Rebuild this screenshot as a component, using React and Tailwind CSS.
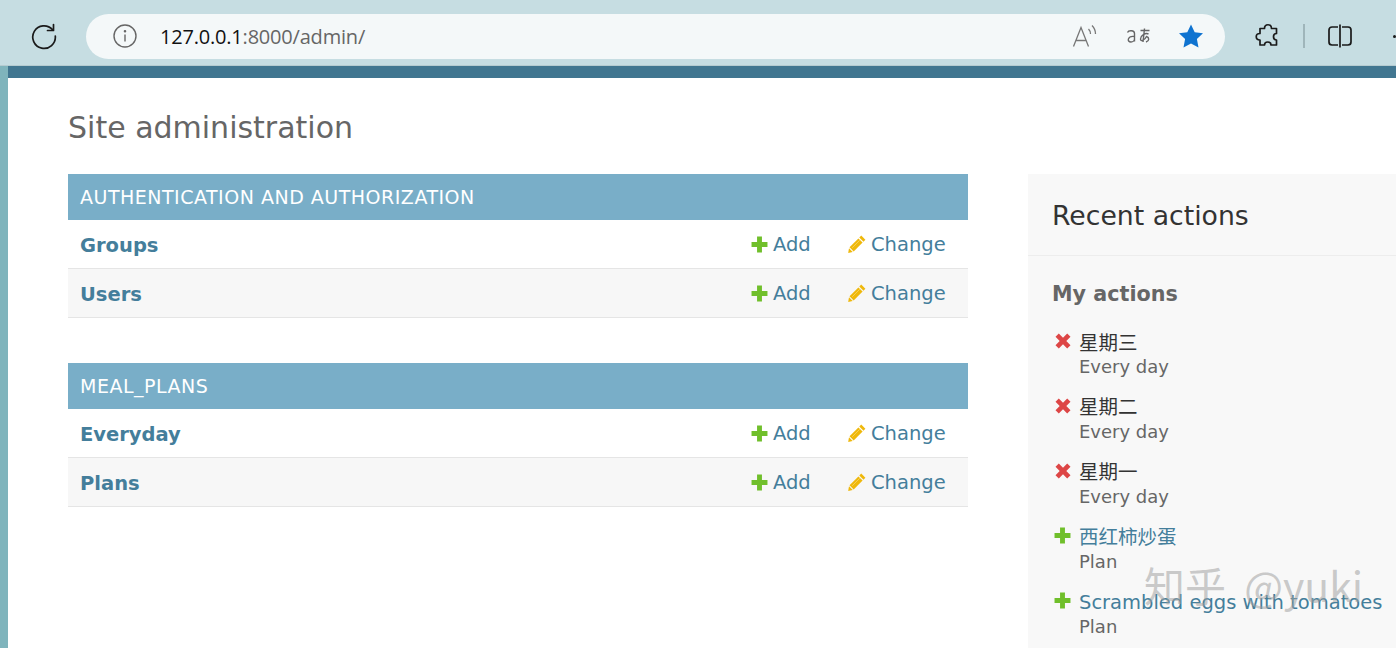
function Plus() {
  return (
    <svg viewBox="0 0 16 16" className="w-[17px] h-[17px] shrink-0">
      <path d="M5.700 0.500h4.600v5.200h5.200v4.600h-5.200v5.200H5.700v-5.200H0.500V5.700h5.200z" fill="#70bf2b" />
    </svg>
  );
}
function Pencil() {
  return (
    <svg viewBox="0 0 18 18" className="w-[18px] h-[18px] shrink-0">
      <path d="M13.200 0.600l4.200 4.200-1.900 1.900-4.200-4.200z" fill="#efb80b" />
      <path d="M10.400 3.400l4.200 4.200-8.900 8.900-4.200-4.200z" fill="#efb80b" />
      <path d="M1 13.300l3.700 3.700-4.500 0.900z" fill="#efb80b" />
      <path d="M4.200 12.800l7.500-7.500" stroke="#f7d56b" strokeWidth="0.800" />
    </svg>
  );
}
function Cross() {
  return (
    <svg viewBox="0 0 16 16" className="w-[16px] h-[16px] shrink-0 ml-[1px] mt-[1px]">
      <path d="M3.800 0.500L8 4.700l4.200-4.200 3.300 3.300L11.300 8l4.200 4.200-3.300 3.300L8 11.300l-4.200 4.200-3.300-3.300L4.700 8 0.500 3.800z" fill="#dd4646" />
    </svg>
  );
}
function Row({ name, alt }) {
  return (
    <div className={"flex items-center h-[49px] border-b border-[#e5e5e5] pl-[12px] text-[19.500px] text-[#447e9b] " + (alt ? "bg-[#f7f7f7]" : "bg-white")}>
      <span className="flex-1 font-bold leading-[24px] pt-[3px]">{name}</span>
      <span className="w-[97px] flex items-center gap-[5px]"><Plus /><span className="leading-[24px] pt-[2px]">Add</span></span>
      <span className="w-[120px] flex items-center gap-[5px]"><Pencil /><span className="leading-[24px] pt-[2px]">Change</span></span>
    </div>
  );
}
function Module({ title, rows, className = "" }) {
  return (
    <div className={className}>
      <div className="h-[46px] bg-[#79aec8] text-white text-[19px] tracking-[0.500px] pl-[12px] flex items-center">{title}</div>
      {rows.map((r, i) => <Row key={r} name={r} alt={i % 2 === 1} />)}
    </div>
  );
}
function Action({ icon, title, link, type, first }) {
  return (
    <div className="flex h-[65px] pl-[25px] relative">
      <span className="absolute left-[0px] top-[3px]">{icon}</span>
      <div className="leading-[25px]">
        <div className={"text-[19.500px] h-[25px] " + (first ? "pt-[2px] " : "pt-[1px] ") + (link ? "text-[#447e9b]" : "text-[#333333]")}>{title}</div>
        <div className="text-[18px] text-[#666666]">{type}</div>
      </div>
    </div>
  );
}

export default function App() {
  return (
    <div className="w-[1396px] h-[648px] overflow-hidden relative bg-white flex flex-col" style={{ fontFamily: '"DejaVu Sans", "Noto Sans CJK SC", sans-serif' }}>
      {/* browser bar */}
      <div className="h-[66px] shrink-0 bg-[#c6dde2] flex items-center pl-[30px] pt-[7px] pb-[0px] border-b border-[#b5cbd0]">
        <svg viewBox="0 0 28 28" className="w-[28px] h-[28px]" fill="none" stroke="#1a1a1a" strokeWidth="1.700">
          <path d="M22.500 7.600A11.300 11.300 0 1 0 25.300 14" strokeLinecap="round" />
          <path d="M23.500 2.500v6h-6" strokeLinecap="round" strokeLinejoin="round" />
        </svg>
        <div className="ml-[28px] w-[1139px] h-[45px] bg-[#f4f8f9] rounded-[23px] flex items-center pl-[27px] pr-[21px]" style={{ fontFamily: '"Open Sans", sans-serif' }}>
          <svg viewBox="0 0 24 24" className="w-[24px] h-[24px]" fill="none" stroke="#666" strokeWidth="1.400">
            <circle cx="12" cy="12" r="11" />
            <path d="M12 10.500v7" />
            <circle cx="12" cy="7.300" r="0.600" fill="#666" />
          </svg>
          <div className="ml-[23px] text-[20px] tracking-[-0.200px] flex-1 pt-[1px]">
            <span className="text-[#111]">127.0.0.1</span><span className="text-[#666]">:8000/admin/</span>
          </div>
          <svg viewBox="0 0 26 24" className="w-[26px] h-[24px]" fill="none" stroke="#777" strokeWidth="1.300">
            <path d="M1.500 22.500L9 3.500l7.500 19M4 16.500h10" />
            <path d="M16.500 5c1.500 1.500 2 3 2 5M20 1.500c2.500 2.500 3.500 5 3.500 8.500" />
          </svg>
          <svg viewBox="0 0 28 20" className="ml-[27px] w-[28px] h-[20px]" fill="none" stroke="#666" strokeWidth="1.400">
            <path d="M2.500 6.500c1-2.500 7-2.500 7 1v8M9.500 10.500c-7-1-8 5.500-3.500 5.500 2 0 3.500-1.500 3.500-3" />
            <path d="M15.500 4.500h9M19.500 2.500c-.5 5-1 9 -1.500 13.500M23.500 8c-3-1.500-8 1.500-8 5 0 3 4 1.500 6-2.500 3 1 3 4.500-.5 5.500" />
          </svg>
          <svg viewBox="0 0 26 26" className="ml-[25px] w-[26px] h-[26px]">
            <path d="M13 1.500l3.700 7.700 8.300 1.100-6.100 5.800 1.600 8.400L13 20.400l-7.500 4.100 1.600-8.400L1 10.300l8.300-1.100z" fill="#0f73d0" />
          </svg>
        </div>
        <svg viewBox="0 0 26 26" className="ml-[30px] w-[26px] h-[26px]" fill="none" stroke="#1a1a1a" strokeWidth="1.700" strokeLinejoin="round">
          <path d="M9.500 5.500c0-5 7-5 7 0h5v5c-4 0-4 6.500 0 6.500v5h-5.500c0-4-6.500-4-6.500 0H5v-5c-5 0-5-6.500 0-6.500V5.500z" />
        </svg>
        <div className="ml-[22px] w-[2px] h-[24px] bg-[#9fb5ba]" />
        <svg viewBox="0 0 26 26" className="ml-[22px] w-[26px] h-[26px]" fill="none" stroke="#1a1a1a" strokeWidth="1.700">
          <path d="M11 4H5a3 3 0 0 0-3 3v12a3 3 0 0 0 3 3h6M15 4h6a3 3 0 0 1 3 3v12a3 3 0 0 1-3 3h-6M13 1.500v23" />
        </svg>
        <div className="ml-[40px] w-[3px] h-[3px] rounded-full bg-[#1a1a1a] shrink-0" />
      </div>
      <div className="flex-1 flex min-h-0">
        <div className="w-[8px] bg-[#7fb4bc] shrink-0" />
        <div className="flex-1 min-w-0 flex flex-col">
          <div className="h-[12px] bg-[#417690] shrink-0" />
          <div className="pl-[60px] flex-1 min-h-0">
            <h1 className="text-[30px] leading-[36px] text-[#666666] mt-[32px]">Site administration</h1>
            <div className="flex mt-[28px]">
              <div className="w-[900px] shrink-0">
                <Module title="AUTHENTICATION AND AUTHORIZATION" rows={["Groups", "Users"]} />
                <Module title="MEAL_PLANS" rows={["Everyday", "Plans"]} className="mt-[45px]" />
              </div>
              <div className="ml-[60px] flex-1 bg-[#f8f8f8] h-[500px] pl-[24px] overflow-hidden">
                <div className="h-[82px] -ml-[24px] pl-[24px] pt-[4px] border-b border-[#ededed] flex items-center text-[26.700px] text-[#333333]">Recent actions</div>
                <div className="mt-[24px] font-bold text-[20.700px] leading-[28px] text-[#666666]">My actions</div>
                <div className="mt-[21px] pl-[2px]">
                  <Action icon={<Cross />} title="星期三" type="Every day" first />
                  <Action icon={<Cross />} title="星期二" type="Every day" />
                  <Action icon={<Cross />} title="星期一" type="Every day" />
                  <Action icon={<Plus />} title="西红柿炒蛋" type="Plan" link />
                  <Action icon={<Plus />} title="Scrambled eggs with tomatoes" type="Plan" link />
                </div>
              </div>
            </div>
          </div>
        </div>
      </div>
      <div className="absolute left-[1144px] top-[559px] text-[41px] leading-[50px] text-[#a0a0a0]/55 [word-spacing:9px]" style={{ fontFamily: '"Noto Sans CJK SC", sans-serif' }}>知乎 @yuki</div>
    </div>
  );
}
